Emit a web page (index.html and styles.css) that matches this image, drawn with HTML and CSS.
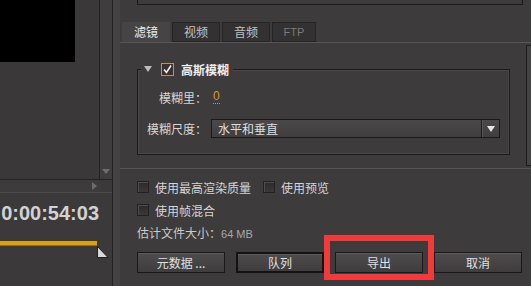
FILE: index.html
```html
<!DOCTYPE html>
<html lang="zh-CN">
<head>
    <meta charset="UTF-8">
    <meta name="viewport" content="width=device-width, initial-scale=1.0">
    <title>导出设置</title>
    <link rel="stylesheet" href="styles.css">
</head>
<body>
    <div class="app">
        <div class="monitor-pane">
            <div class="monitor">
                <div class="viewport"><div class="video"></div></div>
                <div class="vscroll"><span class="arrow-down"></span></div>
                <div class="hscroll"><span class="arrow-right"></span></div>
                <div class="corner"></div>
            </div>
            <div class="timecode">0:00:54:03</div>
            <div class="timeline">
                <div class="work-area"></div>
                <svg class="out-point" width="12" height="12" viewBox="0 0 12 12">
                    <polygon points="0.5,0.5 0.5,11.5 11,11.5" fill="#d8d8d8" stroke="#222" stroke-width="1"/>
                </svg>
            </div>
        </div>

        <div class="splitter"></div>

        <div class="settings-pane">
            <div class="top-box"></div>

            <div class="tabs">
                <div class="tab active">滤镜</div>
                <div class="tab">视频</div>
                <div class="tab">音频</div>
                <div class="tab disabled">FTP</div>
            </div>

            <div class="filter-area">
                <div class="filter-main">
                    <div class="group">
                        <div class="group-head">
                            <span class="twisty"></span>
                            <span class="check checked">
                                <svg width="11" height="11" viewBox="0 0 11 11">
                                    <path d="M2 5.5 L4.5 8.5 L9 1.5" fill="none" stroke="#f0f0f0" stroke-width="1.6"/>
                                </svg>
                            </span>
                            <span class="group-title">高斯模糊</span>
                        </div>
                        <div class="field">
                            <span class="field-label">模糊里：</span>
                            <span class="scrub-value">0</span>
                        </div>
                        <div class="field">
                            <span class="field-label">模糊尺度：</span>
                            <div class="select">
                                <span class="select-text">水平和垂直</span>
                                <span class="select-arrow"></span>
                            </div>
                        </div>
                    </div>
                </div>
                <div class="side-scroll"></div>
            </div>

            <div class="options">
                <div class="option-row">
                    <label class="option"><span class="box"></span>使用最高渲染质量</label>
                    <label class="option"><span class="box"></span>使用预览</label>
                </div>
                <div class="option-row">
                    <label class="option"><span class="box"></span>使用帧混合</label>
                </div>
                <div class="estimate">估计文件大小：<span class="size">64 MB</span></div>
            </div>

            <div class="buttons">
                <button class="btn">元数据 ...</button>
                <button class="btn default">队列</button>
                <button class="btn">导出</button>
                <button class="btn">取消</button>
            </div>

            <div class="highlight"></div>
        </div>
    </div>
</body>
</html>
```

FILE: styles.css
```css
* {
    box-sizing: border-box;
}

body {
    margin: 0;
    width: 531px;
    height: 286px;
    overflow: hidden;
    background: #3b393a;
    font-family: "Noto Sans CJK SC", "Liberation Sans", sans-serif;
    font-size: 12px;
    color: #d6d6d6;
}

.app {
    display: flex;
    height: 286px;
}

/* ---- left: monitor ---- */

.monitor-pane {
    width: 112px;
    flex-shrink: 0;
    background: #3b393a;
}

.monitor {
    display: grid;
    grid-template-columns: 100px 12px;
    grid-template-rows: 180px 13px;
}

.viewport {
    border-right: 1px solid #242223;
    border-bottom: 1px solid #242223;
    background: #3a3839;
}

.video {
    width: 75px;
    height: 62px;
    background: #000;
}

.vscroll {
    border-bottom: 1px solid #242223;
    background: #3f3d3e;
    display: flex;
    align-items: flex-end;
    justify-content: center;
    padding-bottom: 5px;
}

.arrow-down {
    width: 0;
    height: 0;
    border-left: 4px solid transparent;
    border-right: 4px solid transparent;
    border-top: 5px solid #6e6c6d;
}

.hscroll {
    border-bottom: 1px solid #4c4a4b;
    background: #3d3b3c;
    display: flex;
    align-items: center;
    justify-content: flex-end;
    padding-right: 3px;
}

.arrow-right {
    width: 0;
    height: 0;
    border-top: 4px solid transparent;
    border-bottom: 4px solid transparent;
    border-left: 5px solid #6e6c6d;
}

.corner {
    border-bottom: 1px solid #4c4a4b;
}

.timecode {
    display: flex;
    justify-content: flex-end;
    margin-top: 8px;
    padding-right: 13px;
    white-space: nowrap;
    font-family: "Liberation Sans", Arial, sans-serif;
    font-weight: bold;
    font-size: 20px;
    line-height: 24px;
    color: #d2d2d2;
}

.timeline {
    position: relative;
    margin-top: 16px;
}

.work-area {
    width: 97px;
    height: 5px;
    background: #d6a11f;
    border-bottom: 1px solid #9a7014;
}

.out-point {
    position: absolute;
    left: 97px;
    top: 5px;
}

.splitter {
    width: 8px;
    flex-shrink: 0;
    border-left: 1px solid #242223;
    background: #444243;
}

/* ---- right: export settings ---- */

.settings-pane {
    position: relative;
    width: 411px;
    flex-shrink: 0;
    background: #3d3b3c;
}

.top-box {
    height: 5px;
    margin: 0 8px 0 17px;
    border: 1px solid #1c1a1b;
    border-top: none;
}

.tabs {
    display: flex;
    gap: 2px;
    height: 21px;
    margin-top: 17px;
    padding-left: 2px;
    border-bottom: 1px solid #575556;
}

.tab {
    width: 48px;
    height: 20px;
    line-height: 18px;
    text-align: center;
    background: #333132;
    border: 1px solid #262425;
    color: #c2c2c2;
}

.tab.active {
    background: #464445;
    border-color: #464445;
    color: #ececec;
}

.tab.disabled {
    width: 44px;
    font-family: "Liberation Sans", Arial, sans-serif;
    font-size: 11px;
    color: #7c7a7b;
}

.filter-area {
    display: flex;
    height: 126px;
    border-bottom: 1px solid #555354;
}

.filter-main {
    flex: 1;
    padding: 26px 0 0 17px;
}

.group {
    position: relative;
    width: 373px;
    height: 86px;
    padding-top: 17px;
    border: 1px solid #1c1a1b;
    box-shadow: inset 1px 1px 0 #494748, inset -1px -1px 0 #494748;
}

.group-head {
    position: absolute;
    left: 3px;
    top: -9px;
    display: flex;
    align-items: center;
    height: 16px;
    padding: 0 4px 0 3px;
    background: #3d3b3c;
}

.twisty {
    width: 0;
    height: 0;
    margin-right: 9px;
    border-left: 4px solid transparent;
    border-right: 4px solid transparent;
    border-top: 6px solid #bdbdbd;
}

.check {
    display: flex;
    align-items: center;
    justify-content: center;
    width: 13px;
    height: 13px;
    margin-right: 7px;
    background: #3a3030;
    border: 1px solid #b8955c;
}

.group-title {
    font-weight: bold;
    color: #efefef;
}

.field {
    display: flex;
    align-items: center;
    height: 20px;
    margin-bottom: 11px;
}

.field-label {
    width: 69px;
    margin-right: 4px;
    text-align: right;
    white-space: nowrap;
}

.scrub-value {
    margin-left: 2px;
    font-family: "Liberation Sans", Arial, sans-serif;
    font-size: 12px;
    color: #d49a2a;
    border-bottom: 1px dotted #d49a2a;
    line-height: 13px;
}

.select {
    display: flex;
    align-items: center;
    width: 289px;
    height: 19px;
    border: 1px solid #1a1819;
    background: linear-gradient(#4a4849, #403e3f);
}

.select-text {
    flex: 1;
    padding-left: 6px;
    color: #dedede;
}

.select-arrow {
    position: relative;
    width: 18px;
    height: 17px;
    border-left: 1px solid #1f1d1e;
    box-shadow: inset 1px 0 0 #575556;
}

.select-arrow::after {
    content: "";
    position: absolute;
    left: 5px;
    top: 6px;
    border-left: 4px solid transparent;
    border-right: 4px solid transparent;
    border-top: 6px solid #e6e6e6;
}

.side-scroll {
    width: 5px;
    height: 121px;
    margin-top: 2px;
    border: 1px solid #1e1c1d;
    border-right: none;
    background: #444243;
}

.options {
    padding: 8px 0 0 17px;
}

.option-row {
    display: flex;
    gap: 12px;
    height: 20px;
    margin-bottom: 3px;
}

.option {
    display: flex;
    align-items: center;
    gap: 6px;
}

.box {
    width: 12px;
    height: 12px;
    background: linear-gradient(#2c2a2b, #3a3839);
    border: 1px solid #232122;
    box-shadow: inset 1px 1px 0 #4e4c4d;
}

.estimate {
    height: 20px;
    line-height: 20px;
    margin-top: 1px;
    color: #cacaca;
}

.size {
    font-family: "Liberation Sans", Arial, sans-serif;
    font-size: 11px;
    color: #a9a9a9;
}

.buttons {
    display: flex;
    gap: 11px;
    margin-top: 9px;
    padding-left: 17px;
}

.btn {
    width: 88px;
    height: 21px;
    padding: 0;
    border: 1px solid #1a1819;
    background: linear-gradient(#4e4c4d, #3e3c3d);
    box-shadow: inset 0 1px 0 #5c5a5b;
    font-family: inherit;
    font-size: 12px;
    color: #e0e0e0;
}

.btn.default {
    border: 2px solid #141213;
}

.highlight {
    position: absolute;
    left: 204px;
    top: 235px;
    width: 110px;
    height: 45px;
    border: 6px solid #f23a3a;
}
```
